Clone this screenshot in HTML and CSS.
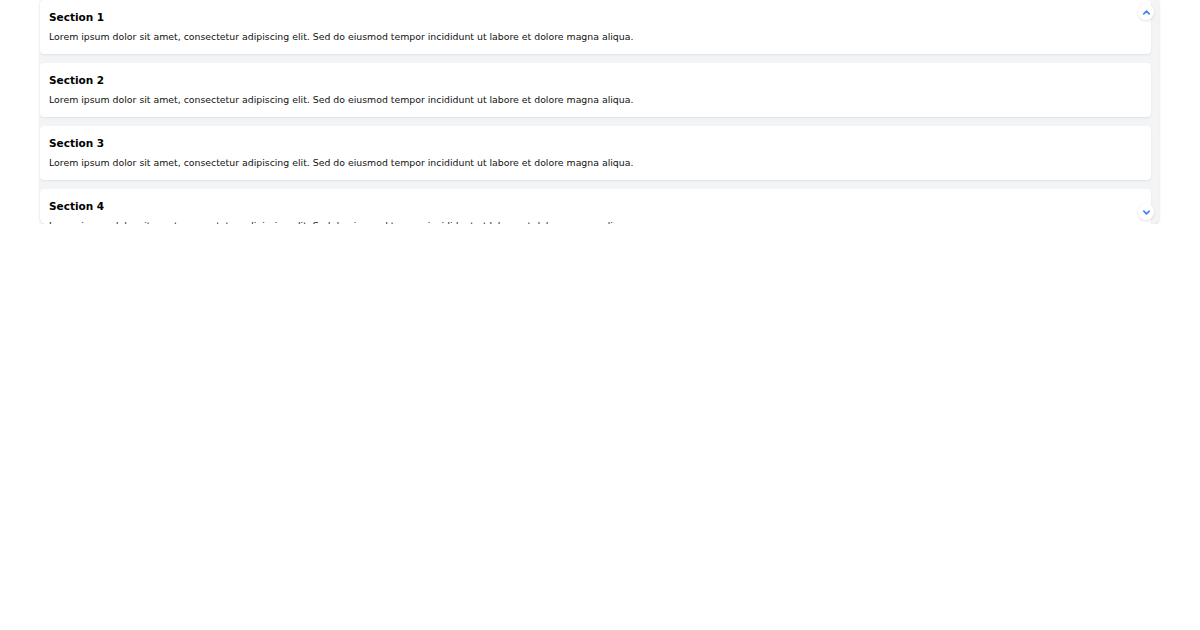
FILE: index.html
```html
<!DOCTYPE html>
<html>
<head>
<meta charset="utf-8">
<link rel="stylesheet" href="styles.css">
</head>
<body>
<div class="page">
  <div class="scroller">
    <div class="list">
      <div class="card">
        <div class="card-title">Section 1</div>
        <div class="card-text">Lorem ipsum dolor sit amet, consectetur adipiscing elit. Sed do eiusmod tempor incididunt ut labore et dolore magna aliqua.</div>
      </div>
      <div class="card">
        <div class="card-title">Section 2</div>
        <div class="card-text">Lorem ipsum dolor sit amet, consectetur adipiscing elit. Sed do eiusmod tempor incididunt ut labore et dolore magna aliqua.</div>
      </div>
      <div class="card">
        <div class="card-title">Section 3</div>
        <div class="card-text">Lorem ipsum dolor sit amet, consectetur adipiscing elit. Sed do eiusmod tempor incididunt ut labore et dolore magna aliqua.</div>
      </div>
      <div class="card">
        <div class="card-title">Section 4</div>
        <div class="card-text">Lorem ipsum dolor sit amet, consectetur adipiscing elit. Sed do eiusmod tempor incididunt ut labore et dolore magna aliqua.</div>
      </div>
    </div>
    <button class="nav-btn nav-up" aria-label="Scroll up">
      <svg viewBox="0 0 10 10" width="9" height="9"><path d="M2 6.5 L5 3.5 L8 6.5" fill="none" stroke="#3b82f6" stroke-width="1.8" stroke-linecap="round" stroke-linejoin="round"/></svg>
    </button>
    <button class="nav-btn nav-down" aria-label="Scroll down">
      <svg viewBox="0 0 10 10" width="9" height="9"><path d="M2 3.5 L5 6.5 L8 3.5" fill="none" stroke="#3b82f6" stroke-width="1.8" stroke-linecap="round" stroke-linejoin="round"/></svg>
    </button>
  </div>
</div>
</body>
</html>
```
FILE: styles.css
```css
html, body {
  margin: 0;
  padding: 0;
  background: #ffffff;
  font-family: "DejaVu Sans", "Noto Sans", sans-serif;
  color: #111111;
}
.page {
  padding: 0 41px 0 40px;
}
.scroller {
  position: relative;
  height: 224px;
  overflow: hidden;
  background: #f3f4f6;
  border-radius: 0 0 6px 6px;
  box-shadow: 0 1px 3px rgba(0,0,0,0.12), 0 1px 2px rgba(0,0,0,0.06);
  padding-right: 8px;
}
.list {
  display: flex;
  flex-direction: column;
  gap: 9px;
}
.card {
  background: #ffffff;
  border-radius: 4px;
  box-shadow: 0 1px 2px rgba(0,0,0,0.08);
  padding: 9px 9px 10px;
}
.card-title {
  font-size: 10.5px;
  font-weight: bold;
  line-height: 16px;
  margin-bottom: 5px;
  color: #000;
}
.card-text {
  font-size: 9.35px;
  line-height: 14px;
  color: #111;
}
.nav-btn {
  position: absolute;
  right: 5px;
  width: 16px;
  height: 16px;
  padding: 0;
  border: none;
  border-radius: 50%;
  background: #ffffff;
  box-shadow: 0 1px 3px rgba(0,0,0,0.12);
  display: flex;
  align-items: center;
  justify-content: center;
  cursor: pointer;
}
.nav-up { top: 4px; }
.nav-down { bottom: 4px; }
```
